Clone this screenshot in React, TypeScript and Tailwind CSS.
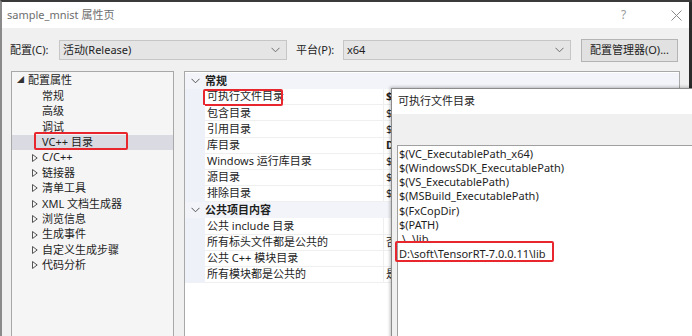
import React from 'react';

const font = "font-['Noto_Sans','Noto_Sans_CJK_SC',sans-serif]";

const treeItems: { label: string; level: number; kind: 'open' | 'closed' | 'leaf'; selected?: boolean }[] = [
  { label: '配置属性', level: 0, kind: 'open' },
  { label: '常规', level: 1, kind: 'leaf' },
  { label: '高级', level: 1, kind: 'leaf' },
  { label: '调试', level: 1, kind: 'leaf' },
  { label: 'VC++ 目录', level: 1, kind: 'leaf', selected: true },
  { label: 'C/C++', level: 1, kind: 'closed' },
  { label: '链接器', level: 1, kind: 'closed' },
  { label: '清单工具', level: 1, kind: 'closed' },
  { label: 'XML 文档生成器', level: 1, kind: 'closed' },
  { label: '浏览信息', level: 1, kind: 'closed' },
  { label: '生成事件', level: 1, kind: 'closed' },
  { label: '自定义生成步骤', level: 1, kind: 'closed' },
  { label: '代码分析', level: 1, kind: 'closed' },
];

type Row = { header?: boolean; name: string; value?: string; bold?: boolean; marked?: boolean };

const rows: Row[] = [
  { header: true, name: '常规' },
  { name: '可执行文件目录', value: '$(VC_ExecutablePath_x64);$(WindowsSDK_ExecutablePath)', bold: true, marked: true },
  { name: '包含目录', value: '$(VC_IncludePath);$(WindowsSDK_IncludePath);' },
  { name: '引用目录', value: '$(VC_ReferencesPath_x64);' },
  { name: '库目录', value: 'D:\\soft\\TensorRT-7.0.0.11\\lib', bold: true },
  { name: 'Windows 运行库目录', value: '$(WindowsSDK_MetadataPath);' },
  { name: '源目录', value: '$(VC_SourcePath);' },
  { name: '排除目录', value: '$(VC_IncludePath);$(WindowsSDK_IncludePath)' },
  { header: true, name: '公共项目内容' },
  { name: '公共 include 目录', value: '' },
  { name: '所有标头文件都是公共的', value: '否' },
  { name: '公共 C++ 模块目录', value: '' },
  { name: '所有模块都是公共的', value: '是' },
];

const paths = [
  '$(VC_ExecutablePath_x64)',
  '$(WindowsSDK_ExecutablePath)',
  '$(VS_ExecutablePath)',
  '$(MSBuild_ExecutablePath)',
  '$(FxCopDir)',
  '$(PATH)',
  '.\\..\\lib',
  'D:\\soft\\TensorRT-7.0.0.11\\lib',
];

function Chevron({ className = '' }: { className?: string }) {
  return (
    <svg width="9" height="6" viewBox="0 0 9 6" className={className}>
      <path d="M0.5 0.8 L4.5 4.8 L8.5 0.8" fill="none" stroke="currentColor" strokeWidth="1" />
    </svg>
  );
}

function Dropdown({ text, width }: { text: string; width: string }) {
  return (
    <div className={`${width} h-[20px] bg-[#e5e5e5] border border-[#c6c6c6] flex items-center pl-[3px] pr-[6px]`}>
      <span className="flex-1 text-[11px] text-[#1e1e1e]">{text}</span>
      <Chevron className="text-[#6d6d6d]" />
    </div>
  );
}

export default function App() {
  return (
    <div className={`${font} relative w-[692px] h-[336px] overflow-hidden bg-[#f0f0f0] border-t-2 border-t-[#3a3a3a] border-l-2 border-l-[#8a8a8a]`}>
      <div className="flex h-full">
        <div className="flex-1 flex flex-col">
          {/* title bar */}
          <div className="h-[26px] bg-white flex items-center pl-[5px] text-[11px] text-[#6e6e6e]">
            <span className="flex-1">sample_mnist 属性页</span>
            <span className="w-[8px] text-[12px] text-[#9a9a9a] mr-[42px]">?</span>
            <svg width="11" height="11" viewBox="0 0 11 11" className="mr-[7px] text-[#8a8a8a]">
              <path d="M0.5 0.5 L10.5 10.5 M10.5 0.5 L0.5 10.5" stroke="currentColor" strokeWidth="1" />
            </svg>
          </div>

          {/* config row */}
          <div className="flex items-center h-[24px] mt-[10px] text-[11px] text-[#1e1e1e] whitespace-nowrap">
            <span className="w-[57px] pl-[8px]">配置(C):</span>
            <Dropdown text="活动(Release)" width="w-[228px]" />
            <span className="w-[56px] pl-[9px]">平台(P):</span>
            <Dropdown text="x64" width="w-[228px]" />
            <div className="ml-[10px] w-[97px] h-[23px] bg-[#e1e1e1] border border-[#b4b4b4] flex items-center justify-center">
              配置管理器(O)...
            </div>
          </div>

          {/* panels */}
          <div className="flex flex-1 mt-[9px] min-h-0">
            {/* tree */}
            <div className="ml-[9px] w-[163px] bg-[#f5f5f5] border border-[#a8a8a8] border-b-0 pt-[1px] text-[11px] text-[#1e1e1e]">
              {treeItems.map((item, i) => (
                <div
                  key={i}
                  className={`relative h-[15.4px] flex items-center ${item.selected ? 'bg-[#dadbe2]' : ''}`}
                >
                  {item.kind === 'open' && (
                    <span className="absolute left-[5px] text-[7px] text-[#333]">◢</span>
                  )}
                  {item.kind === 'closed' && (
                    <svg width="6" height="8" viewBox="0 0 6 8" className="absolute left-[20px] text-[#555]">
                      <path d="M0.5 0.5 L5.2 4 L0.5 7.5 Z" fill="none" stroke="currentColor" strokeWidth="1" />
                    </svg>
                  )}
                  <span className={item.level === 0 ? 'pl-[16px]' : 'pl-[30px]'}>{item.label}</span>
                  {item.selected && (
                    <span className="absolute left-[22px] top-[-3px] w-[94px] h-[18px] border-2 border-[#e7272d] rounded-[2px]" />
                  )}
                </div>
              ))}
            </div>

            {/* property grid */}
            <div className="ml-[10px] w-[496px] bg-white border border-[#a8a8a8] border-b-0 pt-[1px] text-[11px] text-[#1e1e1e]">
              {rows.map((r, i) =>
                r.header ? (
                  <div key={i} className="h-[16.17px] flex items-center bg-[#f2f4f9]">
                    <Chevron className="ml-[6px] text-[#555]" />
                    <span className="ml-[5px] font-bold">{r.name}</span>
                  </div>
                ) : (
                  <div key={i} className="relative h-[16.17px] flex">
                    <div className="w-[20px] bg-[#eef1f8]" />
                    <div className="w-[179px] border-b border-[#efefef] border-r flex items-center pl-[2px] whitespace-nowrap">
                      {r.name}
                    </div>
                    <div className={`flex-1 border-b border-[#efefef] flex items-center pl-[2px] whitespace-nowrap ${r.bold ? 'font-bold' : ''}`}>
                      <span className="w-[7px] overflow-hidden">{r.value}</span>
                    </div>
                    {r.marked && (
                      <span className="absolute left-[18px] top-0 w-[80px] h-[16.5px] border-2 border-[#e7272d] rounded-[2px]" />
                    )}
                  </div>
                )
              )}
            </div>
          </div>
        </div>
        <div className="w-[3px] bg-[#2b2b2b]" />
      </div>

      {/* list dialog */}
      <div className="absolute left-[389px] top-[86px] w-[320px] h-[270px] bg-[#f0f0f0] border-l border-t border-[#8c8c8c] shadow-[-1px_-1px_3px_rgba(0,0,0,0.25)] flex flex-col">
        <div className="h-[25px] bg-white flex items-center pl-[6px] text-[11px] text-[#1e1e1e]">
          可执行文件目录
        </div>
        <div className="relative mt-[31px] ml-[5px] flex-1 bg-white border-l border-t border-[#a0a0a0] pt-[0.5px] pl-[1px] text-[11px] leading-[14.3px] text-[#1e1e1e] whitespace-nowrap">
          {paths.map((p, i) => (
            <div key={i} className="h-[14.3px]">{p}</div>
          ))}
          <span className="absolute left-[-3px] top-[95px] w-[159px] h-[21px] border-2 border-[#e7272d] rounded-[2px]" />
        </div>
      </div>
    </div>
  );
}
